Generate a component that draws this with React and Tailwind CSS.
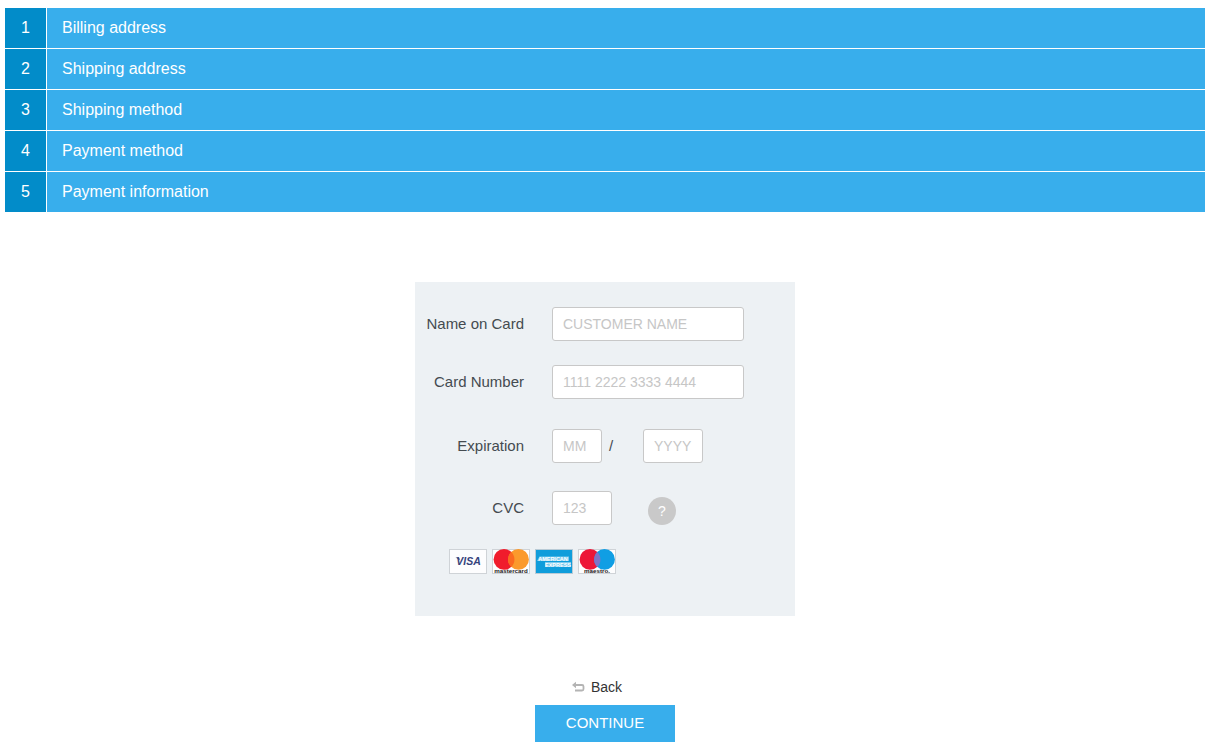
import React from "react";

const steps = [
  "Billing address",
  "Shipping address",
  "Shipping method",
  "Payment method",
  "Payment information",
];

const labelClass = "w-[109px] shrink-0 text-right text-[15px] leading-5 text-[#444b50]";
const inputClass =
  "h-[34px] rounded-[3px] border border-[#c8c8c8] bg-white pl-2.5 text-sm text-[#444b50] outline-none placeholder:text-[#c6c6c6] placeholder:opacity-100 focus:border-[#38aeec]";

function Visa() {
  return (
    <svg role="img" aria-label="Visa" width="38" height="25" viewBox="0 0 38 25">
      <rect x="0.5" y="0.5" width="37" height="24" fill="#fdfdfe" stroke="#cfd3d7" />
      <text x="19.5" y="16" textAnchor="middle" fontSize="10.5" fontWeight="700" fontStyle="italic" fill="#35437c">
        VISA
      </text>
      <path d="M6.500 8.500h3.500l1 2.500z" fill="#35437c" />
    </svg>
  );
}

function Mastercard() {
  return (
    <svg role="img" aria-label="Mastercard" width="38" height="25" viewBox="0 0 38 25">
      <rect x="0.5" y="0.5" width="37" height="24" fill="#fdfdfe" stroke="#cfd3d7" />
      <circle cx="12" cy="10.4" r="10.4" fill="#f01c2c" />
      <circle cx="26.5" cy="10.4" r="10.4" fill="#fb9a2c" />
      <path d="M19.25 2.900a10.400 10.400 0 0 1 0 15a10.400 10.400 0 0 1 0-15z" fill="#fb6a20" />
      <text x="19" y="24" textAnchor="middle" fontSize="6.200" fontWeight="700" fill="#1c1718">
        mastercard
      </text>
    </svg>
  );
}

function Amex() {
  return (
    <svg role="img" aria-label="American Express" width="38" height="25" viewBox="0 0 38 25">
      <rect x="0.5" y="0.5" width="37" height="24" fill="#0f9ddb" stroke="#b9cbd6" />
      <path d="M2 12l2.500-4.500H34V12zM10 13h26v5H10z" fill="#7ccbee" />
      <text x="18" y="12" textAnchor="middle" fontSize="5.500" fontWeight="700" fill="#ffffff">
        AMERICAN
      </text>
      <text x="23" y="17.700" textAnchor="middle" fontSize="5.500" fontWeight="700" fill="#ffffff">
        EXPRESS
      </text>
    </svg>
  );
}

function Maestro() {
  return (
    <svg role="img" aria-label="Maestro" width="38" height="25" viewBox="0 0 38 25">
      <rect x="0.5" y="0.5" width="37" height="24" fill="#fdfdfe" stroke="#cfd3d7" />
      <circle cx="12" cy="10.4" r="10.4" fill="#ed1638" />
      <circle cx="26.5" cy="10.4" r="10.4" fill="#109ee4" />
      <path d="M19.25 2.900a10.400 10.400 0 0 1 0 15a10.400 10.400 0 0 1 0-15z" fill="#7f74c8" />
      <text x="19" y="24" textAnchor="middle" fontSize="6.200" fontWeight="700" fill="#1c1718">
        maestro.
      </text>
    </svg>
  );
}

export default function App() {
  return (
    <main className="flex flex-col bg-white pt-2 pr-2.5 pb-2 pl-[5px] font-['Liberation_Sans',Arial,sans-serif]">
      <ol className="flex flex-col gap-px text-base leading-6 text-white">
        {steps.map((step, i) => (
          <li key={step} className="flex h-10 gap-px">
            <span className="flex w-[41px] items-center justify-center bg-[#028cc9]">{i + 1}</span>
            <h2 className="flex flex-1 items-center bg-[#38aeec] pl-[15px]">{step}</h2>
          </li>
        ))}
      </ol>

      <form className="mt-[70px] flex flex-col items-center" onSubmit={(e) => e.preventDefault()}>
        <div className="w-[380px] bg-[#edf1f4] pt-[25px] pb-[42px]">
          <div className="flex items-center gap-7">
            <label htmlFor="name" className={labelClass}>Name on Card</label>
            <input id="name" type="text" placeholder="CUSTOMER NAME" className={`${inputClass} w-48`} />
          </div>
          <div className="mt-6 flex items-center gap-7">
            <label htmlFor="number" className={labelClass}>Card Number</label>
            <input id="number" type="text" placeholder="1111 2222 3333 4444" className={`${inputClass} w-48`} />
          </div>
          <div className="mt-[30px] flex items-center gap-7">
            <label htmlFor="month" className={labelClass}>Expiration</label>
            <div className="flex items-center">
              <input id="month" type="text" placeholder="MM" className={`${inputClass} w-[50px]`} />
              <span className="w-[41px] pl-[7px] text-[15px] leading-5 text-[#444b50]">/</span>
              <input id="year" type="text" aria-label="Expiration year" placeholder="YYYY" className={`${inputClass} w-[60px]`} />
            </div>
          </div>
          <div className="mt-7 flex items-center gap-7">
            <label htmlFor="cvc" className={labelClass}>CVC</label>
            <div className="flex items-end gap-9">
              <input id="cvc" type="text" placeholder="123" className={`${inputClass} w-[60px]`} />
              <button type="button" aria-label="What is CVC?" className="size-7 rounded-full bg-[#c9c9c9] text-sm text-white">
                ?
              </button>
            </div>
          </div>
          <div className="mt-6 flex gap-[5px] pl-[34px]">
            <Visa />
            <Mastercard />
            <Amex />
            <Maestro />
          </div>
        </div>

        <a href="#back" className="mt-[61px] mr-4 flex items-center gap-1.5 text-sm leading-5 text-[#333333]">
          <svg aria-hidden="true" width="13" height="12" viewBox="0 0 13 12" fill="none" stroke="#b4b4b4" strokeWidth="1.8">
            <path d="M2.500 4H10a1.500 1.500 0 0 1 1.500 1.500v2.500a1.500 1.500 0 0 1-1.500 1.500H3" />
            <path d="M0 4L4 0.800V7.200z" fill="#b4b4b4" stroke="none" />
          </svg>
          Back
        </a>
        <button type="submit" className="mt-2 h-[37px] w-[140px] bg-[#38aeec] text-[15px] text-white">
          CONTINUE
        </button>
      </form>
    </main>
  );
}
